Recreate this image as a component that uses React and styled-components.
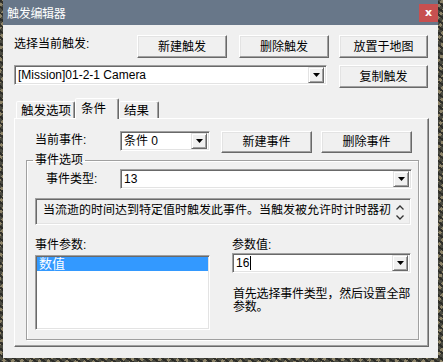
import React from 'react';
import styled, { createGlobalStyle } from 'styled-components';

const FONT = '"Liberation Sans", "Noto Sans CJK SC", sans-serif';

const GlobalStyle = createGlobalStyle`
  html, body {
    margin: 0;
    height: 100%;
  }
  body {
    background:
      repeating-linear-gradient(35deg, rgba(40, 40, 36, 0.9) 0 2px, transparent 2px 5px),
      repeating-linear-gradient(-50deg, #8c8368 0 3px, #4a4a40 3px 7px);
    font-family: ${FONT};
    font-size: 12px;
    color: #000;
  }
`;

const Window = styled.div`
  width: 435px;
  height: 358px;
  margin-left: 3px;
  background: #f0f0f0;
  display: flex;
  flex-direction: column;
`;

const TitleBar = styled.div`
  height: 25px;
  flex: none;
  background: #687789;
  color: #fff;
  display: flex;
  align-items: flex-start;
  justify-content: space-between;
  padding-left: 4px;
`;

const Title = styled.span`
  font-size: 12px;
  line-height: 12px;
  margin-top: 8px;
  letter-spacing: -0.3px;
`;

const CloseButton = styled.div`
  width: 19px;
  height: 18px;
  margin-top: 4px;
  background: #c75050;
  color: #fff;
  font-family: "DejaVu Sans", sans-serif;
  font-weight: bold;
  font-size: 11px;
  line-height: 18px;
  text-align: center;
`;

const Body = styled.div`
  padding: 10px 0 0 11px;
  display: flex;
  flex-direction: column;
`;

const Row = styled.div`
  display: flex;
  align-items: flex-start;
  margin-top: ${(p) => p.$mt || 0}px;
`;

const Label = styled.span`
  width: ${(p) => p.$w}px;
  flex: none;
  box-sizing: border-box;
  padding-left: ${(p) => p.$pl || 0}px;
  line-height: 12px;
  margin-top: ${(p) => p.$mt || 0}px;
  white-space: nowrap;
`;

const Button = styled.button`
  width: ${(p) => p.$w || 90}px;
  height: ${(p) => p.$h || 23}px;
  margin-left: ${(p) => p.$ml || 0}px;
  flex: none;
  padding: 0;
  font: 12px/12px ${FONT};
  color: #000;
  background: #f0f0f0;
  border: 1px solid;
  border-color: #fff #696969 #696969 #fff;
  box-shadow: inset -1px -1px #a0a0a0, inset 1px 1px #e3e3e3;
`;

const Sunken = styled.div`
  border: 1px solid;
  border-color: #a0a0a0 #fff #fff #a0a0a0;
  box-shadow: inset 1px 1px #696969, inset -1px -1px #e3e3e3;
  box-sizing: border-box;
`;

const ComboBox = styled(Sunken)`
  width: ${(p) => p.$w}px;
  height: 20px;
  margin-left: ${(p) => p.$ml || 0}px;
  flex: none;
  background: #fff;
  display: flex;
  align-items: center;
  padding: 2px 2px 2px 3px;
`;

const ComboText = styled.span`
  flex: 1;
  line-height: 12px;
  white-space: nowrap;
  display: flex;
  align-items: center;
`;

const Caret = styled.span`
  width: 1px;
  height: 14px;
  background: #000;
  margin-left: 1px;
`;

const ArrowButton = styled.div`
  width: 16px;
  height: 16px;
  flex: none;
  box-sizing: border-box;
  background: #f0f0f0;
  border: 1px solid;
  border-color: #e3e3e3 #696969 #696969 #e3e3e3;
  box-shadow: inset 1px 1px #fff, inset -1px -1px #a0a0a0;
  display: flex;
  align-items: center;
  justify-content: center;
`;

const TabStrip = styled.div`
  display: flex;
  align-items: flex-end;
  height: 20px;
  margin-top: 10px;
  padding-left: 2px;
  position: relative;
  z-index: 1;
`;

const Tab = styled.div`
  box-sizing: border-box;
  width: ${(p) => p.$w}px;
  height: ${(p) => (p.$active ? 21 : 17)}px;
  margin-bottom: ${(p) => (p.$active ? -1 : 0)}px;
  padding-left: ${(p) => (p.$active ? 5 : 4)}px;
  padding-top: ${(p) => (p.$active ? 4 : 3)}px;
  background: #f0f0f0;
  border: 1px solid;
  border-bottom: none;
  border-color: #fff #696969 transparent #fff;
  border-radius: 2px 2px 0 0;
  box-shadow: inset -1px 0 #a0a0a0;
  font-size: 12.5px;
  line-height: 12px;
  white-space: nowrap;
`;

const Panel = styled.div`
  width: 415px;
  height: 229px;
  box-sizing: border-box;
  background: #f0f0f0;
  border: 1px solid;
  border-color: #fff #696969 #696969 #fff;
  box-shadow: inset -1px -1px #a0a0a0;
  padding: 12px 9px 0 11px;
  display: flex;
  flex-direction: column;
`;

const Group = styled.fieldset`
  margin: 1px 0 0 0;
  padding: 0 0 11px 0;
  height: 186px;
  box-sizing: border-box;
  border: 1px solid #a0a0a0;
  box-shadow: inset 1px 1px #fff, 1px 1px #fff;
  display: flex;
  flex-direction: column;
  min-width: 0;
`;

const Legend = styled.legend`
  margin-left: 6px;
  padding: 0 2px;
  line-height: 12px;
`;

const Description = styled(Sunken)`
  width: 376px;
  height: 27px;
  margin: 9px 0 0 8px;
  background: #f0f0f0;
  display: flex;
  padding: 5px 4px 0 7px;
`;

const DescText = styled.div`
  flex: 1;
  line-height: 12px;
  white-space: nowrap;
  overflow: hidden;
`;

const ScrollArrows = styled.div`
  width: 12px;
  display: flex;
  flex-direction: column;
  align-items: center;
  gap: 5px;
  margin-top: 1px;
`;

const ParamGrid = styled.div`
  display: grid;
  grid-template-columns: 175px 179px;
  column-gap: 22px;
  margin: 14px 0 0 8px;
`;

const Column = styled.div`
  display: flex;
  flex-direction: column;
`;

const ListBox = styled(Sunken)`
  height: 75px;
  margin-top: 4px;
  background: #fff;
  padding: 1px;
`;

const ListItem = styled.div`
  height: 14px;
  line-height: 14px;
  padding-left: 2px;
  color: ${(p) => (p.$selected ? '#fff' : '#000')};
  background: ${(p) => (p.$selected ? '#3399ff' : 'transparent')};
  font-size: 13px;
`;

const Hint = styled.div`
  margin-top: 15px;
  line-height: 13px;
  padding-left: 1px;
  letter-spacing: -0.2px;
`;

const DownArrow = () => (
  <svg width="7" height="4" viewBox="0 0 7 4">
    <path d="M0 0h7L3.5 4z" fill="#000" />
  </svg>
);

const Chevron = ({ up }) => (
  <svg width="8" height="5" viewBox="0 0 8 5">
    <path d={up ? 'M0.5 4.5L4 1l3.5 3.5' : 'M0.5 0.5L4 4l3.5-3.5'} fill="none" stroke="#333" strokeWidth="1.3" />
  </svg>
);

const Combo = ({ w, ml, children }) => (
  <ComboBox $w={w} $ml={ml}>
    <ComboText>{children}</ComboText>
    <ArrowButton>
      <DownArrow />
    </ArrowButton>
  </ComboBox>
);

const App = () => {
  return (
    <>
      <GlobalStyle />
      <Window>
        <TitleBar>
          <Title>触发编辑器</Title>
          <CloseButton>x</CloseButton>
        </TitleBar>
        <Body>
          <Row>
            <Label $w={123} $mt={3}>选择当前触发:</Label>
            <Button>新建触发</Button>
            <Button $ml={12}>删除触发</Button>
            <Button $ml={10} $w={89}>放置于地图</Button>
          </Row>
          <Row $mt={7}>
            <Combo w={313}>[Mission]01-2-1 Camera</Combo>
            <Button $ml={12} $w={89}>复制触发</Button>
          </Row>

          <TabStrip>
            <Tab $w={59}>触发选项</Tab>
            <Tab $w={44} $active>条件</Tab>
            <Tab $w={40}>结果</Tab>
          </TabStrip>
          <Panel>
            <Row>
              <Label $w={94} $pl={9} $mt={3}>当前事件:</Label>
              <Combo w={90}>条件 0</Combo>
              <Button $ml={11} $w={91} $h={22}>新建事件</Button>
              <Button $ml={9} $w={91} $h={22}>删除事件</Button>
            </Row>
            <Group>
              <Legend>事件选项</Legend>
              <Row $mt={3}>
                <Label $w={93} $pl={19} $mt={4}>事件类型:</Label>
                <Combo w={292}>13</Combo>
              </Row>
              <Description>
                <DescText>当流逝的时间达到特定值时触发此事件。当触发被允许时计时器初</DescText>
                <ScrollArrows>
                  <Chevron up />
                  <Chevron />
                </ScrollArrows>
              </Description>
              <ParamGrid>
                <Column>
                  <Label>事件参数:</Label>
                  <ListBox>
                    <ListItem $selected>数值</ListItem>
                  </ListBox>
                </Column>
                <Column>
                  <Label>参数值:</Label>
                  <Row $mt={2}>
                    <Combo w={179}>
                      16<Caret />
                    </Combo>
                  </Row>
                  <Hint>首先选择事件类型，然后设置全部参数。</Hint>
                </Column>
              </ParamGrid>
            </Group>
          </Panel>
        </Body>
      </Window>
    </>
  );
};

export default App;
